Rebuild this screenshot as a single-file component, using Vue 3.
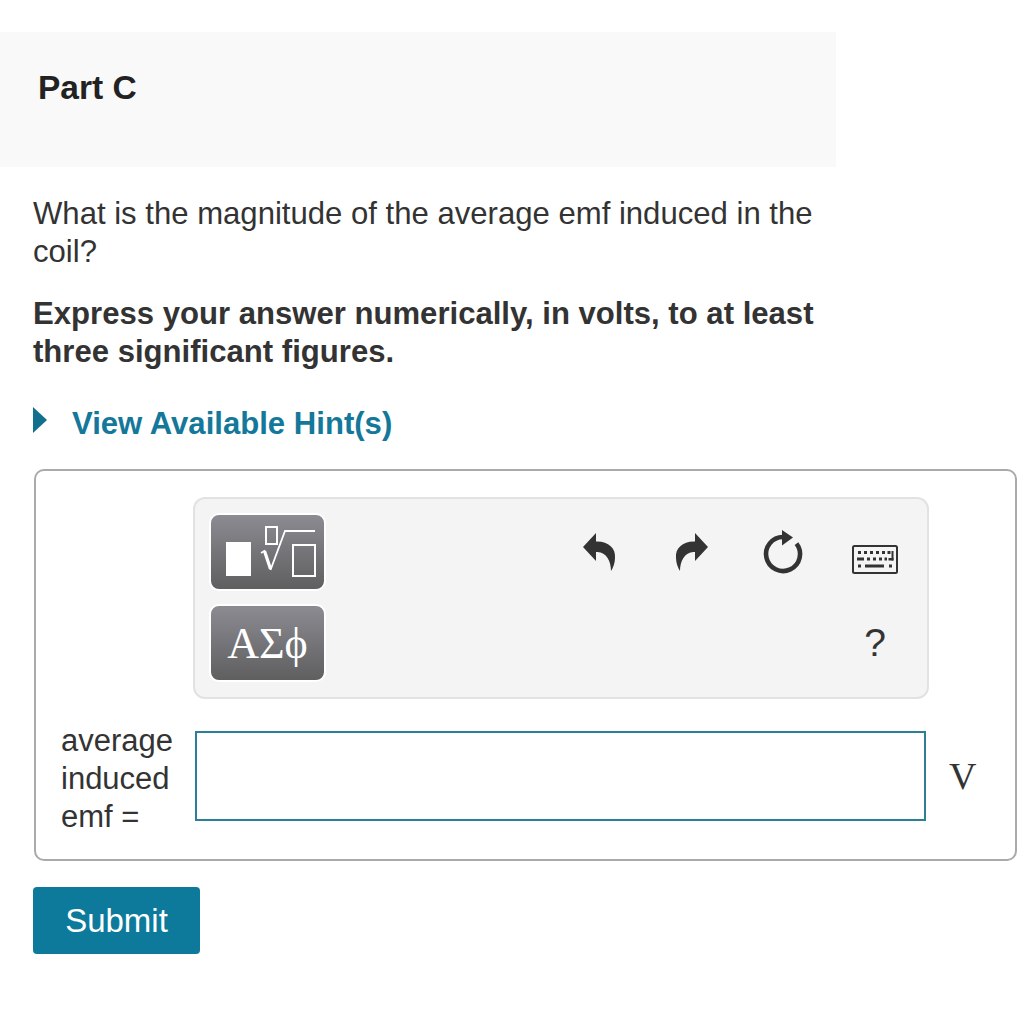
<template>
  <div class="page">
    <header class="part-head">
      <h2>Part C</h2>
    </header>

    <section class="question">
      <p class="prompt">What is the magnitude of the average emf induced in the coil?</p>
      <p class="instruction">Express your answer numerically, in volts, to at least three significant figures.</p>

      <div class="hint">
        <span class="hint-arrow"></span>
        <a class="hint-link">View Available Hint(s)</a>
      </div>

      <div class="answer-card">
        <div class="toolbar">
          <div class="palettes">
            <button class="palette">
              <svg width="113" height="74" viewBox="0 0 113 74">
                <rect x="15" y="27" width="25" height="34" fill="#fff" />
                <g fill="none" stroke="#fff">
                  <rect x="55" y="12" width="11" height="17" stroke-width="2" />
                  <rect x="82" y="30" width="22" height="31" stroke-width="2" />
                  <path d="M50 38 L54 35.5" stroke-width="1.5" />
                  <path d="M53.5 36 L59.5 54" stroke-width="3.2" />
                  <path d="M59.5 55 L74 16 H104" stroke-width="1.8" />
                </g>
              </svg>
            </button>
            <button class="palette greek">ΑΣϕ</button>
          </div>

          <div class="tools">
            <span class="tool">
              <svg width="34" height="42" viewBox="0 0 34 42">
                <path :d="arrowPath" fill="#333" />
              </svg>
            </span>
            <span class="tool">
              <svg class="flip" width="34" height="42" viewBox="0 0 34 42">
                <path :d="arrowPath" fill="#333" />
              </svg>
            </span>
            <span class="tool">
              <svg width="42" height="48" viewBox="0 0 42 48">
                <path d="M34.5 15.6 A17 17 0 1 1 21 9" fill="none" stroke="#333" stroke-width="4.6" />
                <path d="M20 2 L31 9.5 L20 17.5 Z" fill="#333" />
              </svg>
            </span>
            <span class="tool">
              <svg class="keyboard" width="46" height="29" viewBox="0 0 46 29">
                <rect x="1" y="1" width="44" height="27" rx="1.5" fill="#f4f4f4" stroke="#333" stroke-width="2" />
                <g fill="#333">
                  <rect v-for="k in keys" :key="k.join()" :x="k[0]" :y="k[1]" :width="k[2]" :height="k[3]" />
                </g>
              </svg>
            </span>
            <span class="tool"></span>
            <span class="tool"></span>
            <span class="tool"></span>
            <span class="tool help">?</span>
          </div>
        </div>

        <div class="answer-row">
          <label class="answer-label">average induced emf =</label>
          <input class="answer-input" type="text" />
          <span class="unit">V</span>
        </div>
      </div>

      <button class="submit">Submit</button>
    </section>
  </div>
</template>

<script setup>
const arrowPath = "M1 16 L14 2 V10.5 C26 10 34 17 33 27 C33 32 31 37 29 40 C29 30 24 20 14 21 V30 Z";

// keyboard keys as [x, y, width, height]
const keys = [
  [6, 6, 3, 3], [12, 6, 3, 3], [18, 6, 3, 3], [24, 6, 3, 3], [30, 6, 3, 3], [35.5, 6, 3, 3],
  [5, 12.5, 7, 3], [15, 12.5, 3, 3], [21, 12.5, 3, 3], [27, 12.5, 3, 3], [32.5, 12.5, 2.5, 3],
  [39.5, 6, 2, 9.5], [36.5, 13, 5, 2.5],
  [6, 19.5, 3, 3], [13, 19.5, 19, 3], [37, 19.5, 3, 3],
];
</script>

<style scoped>
.page {
  width: 1024px;
  height: 1013px;
  padding-top: 32px;
  box-sizing: border-box;
  font-family: "Liberation Sans", Arial, sans-serif;
  color: #333;
  background: #fff;
  overflow: hidden;
}
.part-head {
  width: 836px;
  height: 135px;
  box-sizing: border-box;
  padding: 36px 0 0 38px;
  background: #f9f9f9;
}
.part-head h2 {
  margin: 0;
  font-size: 33.5px;
  line-height: 39px;
  font-weight: 700;
  color: #222;
}
.question {
  padding: 28px 7px 0 33px;
}
.prompt,
.instruction {
  width: 800px;
  margin: 0;
  font-size: 31.1px;
  line-height: 38px;
}
.prompt {
  margin-bottom: 24px;
}
.instruction {
  font-weight: 700;
}
.hint {
  display: flex;
  align-items: center;
  margin-top: 34px;
  height: 38px;
}
.hint-arrow {
  width: 0;
  height: 0;
  margin: -9px 25px 0 0;
  border-left: 14px solid #12708f;
  border-top: 13px solid transparent;
  border-bottom: 13px solid transparent;
}
.hint-link {
  font-size: 31.1px;
  font-weight: 700;
  color: #14789a;
}
.answer-card {
  box-sizing: border-box;
  height: 392px;
  margin: 26px 0 0 1px;
  padding: 26px 0 0 0;
  border: 2px solid #aaa;
  border-radius: 10px;
}
.toolbar {
  display: flex;
  justify-content: space-between;
  box-sizing: border-box;
  width: 736px;
  height: 202px;
  margin-left: 157px;
  padding: 14px 6px 0 14px;
  background: #f4f4f4;
  border: 2px solid #e2e2e2;
  border-radius: 12px;
}
.palettes {
  display: flex;
  flex-direction: column;
  gap: 13px;
}
.palette {
  display: block;
  box-sizing: border-box;
  width: 117px;
  height: 78px;
  padding: 0;
  border: 2px solid #fff;
  border-radius: 10px;
  background: linear-gradient(#8b8b92, #5f5f60);
}
.palette svg {
  display: block;
}
.greek {
  font-family: "Liberation Serif", "DejaVu Serif", serif;
  font-size: 44px;
  color: #fff;
}
.tools {
  display: grid;
  grid-template-columns: repeat(4, 92px);
  grid-template-rows: 78px 78px;
  row-gap: 13px;
}
.tool {
  display: flex;
  align-items: center;
  justify-content: center;
}
.flip {
  transform: scaleX(-1) translateX(-1px);
}
.keyboard {
  margin-top: 14px;
}
.help {
  font-size: 39px;
  color: #333;
}
.answer-row {
  display: flex;
  align-items: center;
  margin-top: 32px;
  height: 90px;
}
.answer-label {
  box-sizing: border-box;
  width: 159px;
  padding: 5px 0 0 25px;
  font-size: 31px;
  line-height: 38px;
}
.answer-input {
  box-sizing: border-box;
  width: 731px;
  height: 90px;
  border: 2px solid #2b7f98;
  background: #fff;
  outline: none;
}
.unit {
  margin-left: 23px;
  font-family: "Liberation Serif", serif;
  font-size: 38px;
  color: #333;
}
.submit {
  display: block;
  width: 167px;
  height: 67px;
  margin-top: 26px;
  padding: 0;
  border: none;
  border-radius: 4px;
  background: #0d7a9c;
  color: #fff;
  font-family: inherit;
  font-size: 33px;
}
</style>
